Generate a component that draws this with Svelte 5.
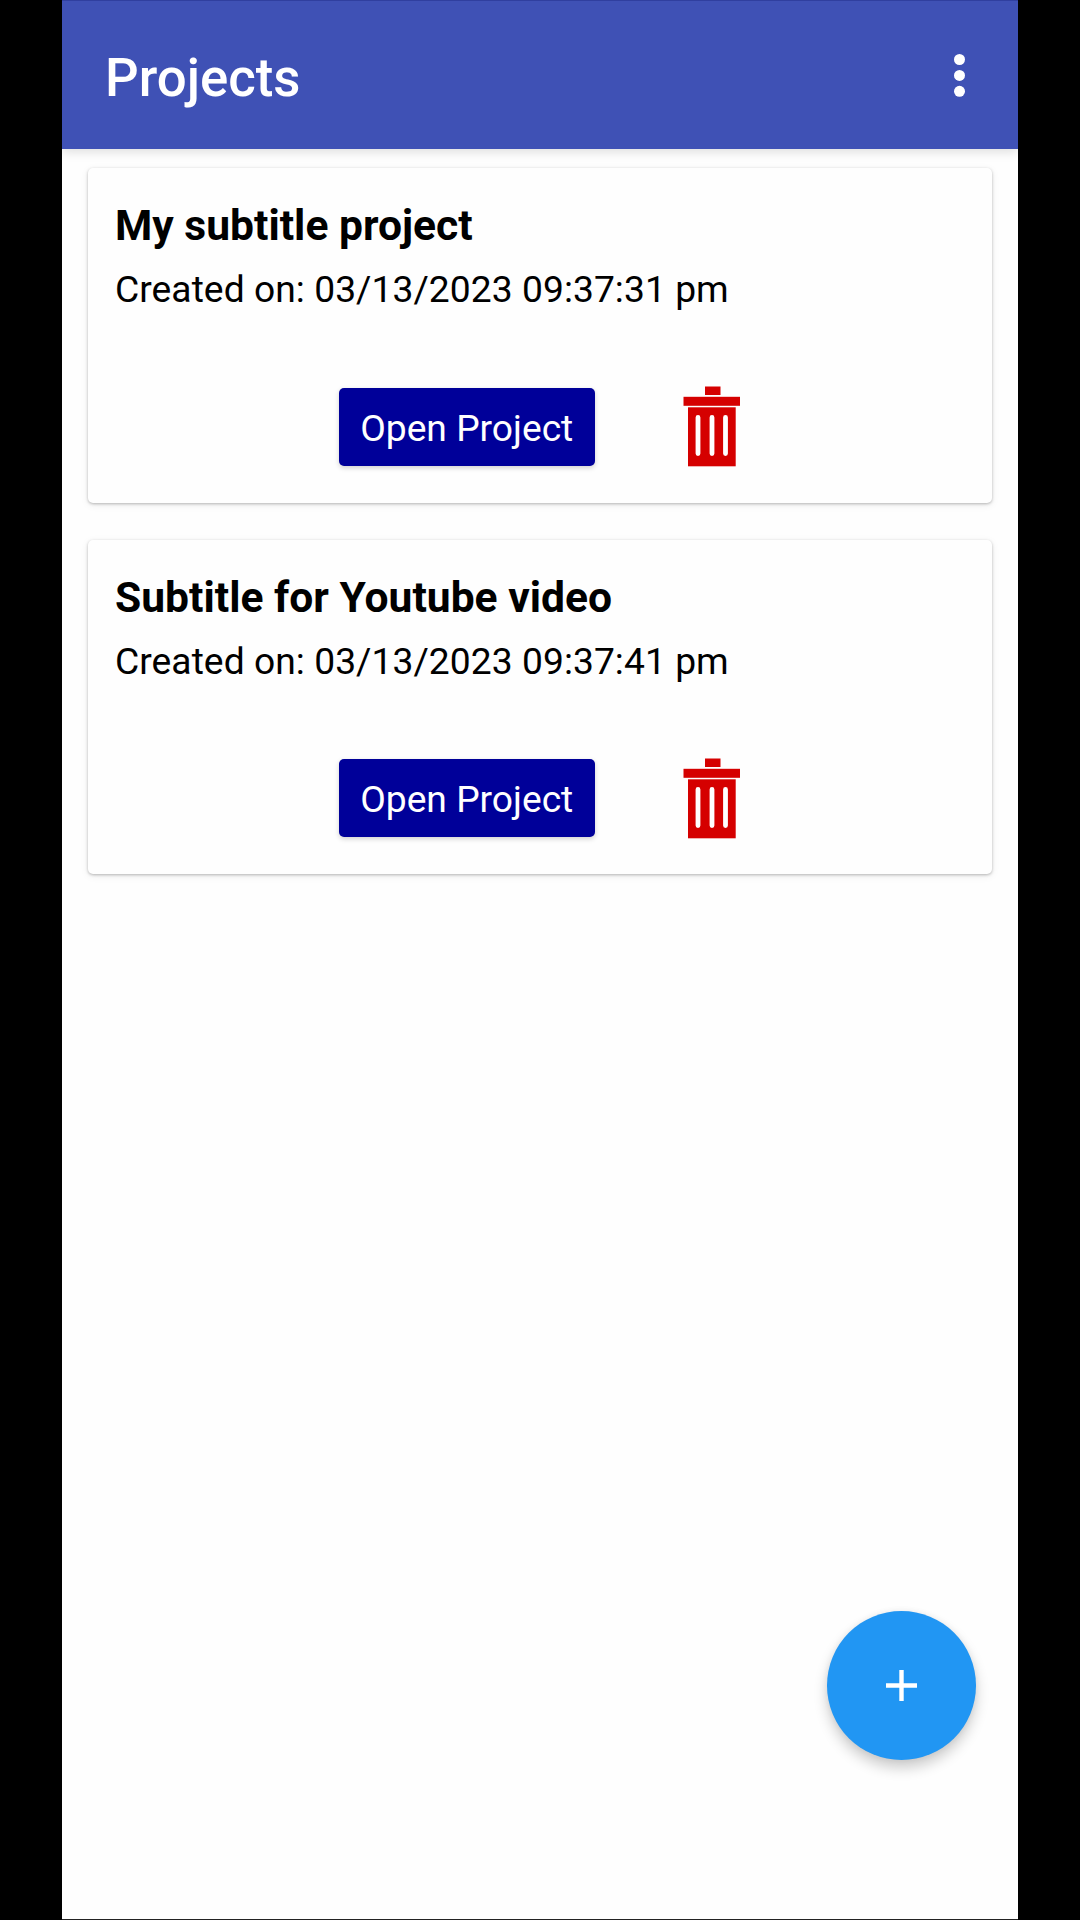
<script lang="ts">
  interface Project {
    name: string;
    created: string;
  }

  let projects: Project[] = $state([
    { name: 'My subtitle project', created: '03/13/2023 09:37:31 pm' },
    { name: 'Subtitle for Youtube video', created: '03/13/2023 09:37:41 pm' }
  ]);

  function removeProject(index: number) {
    projects.splice(index, 1);
  }

  function addProject() {
    projects.push({ name: 'New project', created: '03/13/2023 09:38:00 pm' });
  }
</script>

<div class="screen">
  <header>
    <h1>Projects</h1>
    <button class="menu" aria-label="More options">
      <svg width="12" height="44" viewBox="0 0 12 44" fill="#fff">
        <circle cx="5.5" cy="5.5" r="5.5" />
        <circle cx="5.5" cy="21.4" r="5.5" />
        <circle cx="5.5" cy="37.3" r="5.5" />
      </svg>
    </button>
  </header>

  <main>
    {#each projects as project, i}
      <article class="card">
        <h2>{project.name}</h2>
        <p>Created on: {project.created}</p>
        <div class="actions">
          <button class="open">Open Project</button>
          <button class="delete" aria-label="Delete" onclick={() => removeProject(i)}>
            <svg width="58" height="82" viewBox="0 0 58 82">
              <g fill="#d50000">
                <rect x="22" y="1.5" width="15.5" height="8.5" />
                <rect x="0.5" y="11.8" width="56.5" height="9" />
                <rect x="5" y="22.3" width="47.7" height="59" />
              </g>
              <path
                d="M15 32.5V68.5M29 32.5V68.5M42.5 32.5V68.5"
                stroke="#fff"
                stroke-width="4.8"
                stroke-linecap="round"
              />
            </svg>
          </button>
        </div>
      </article>
    {/each}
  </main>

  <button class="fab" aria-label="Add project" onclick={addProject}>
    <svg width="31" height="31" viewBox="0 0 31 31">
      <path d="M15.5 0V31M0 15.5H31" stroke="#fff" stroke-width="4.4" />
    </svg>
  </button>
</div>

<style>
  :global(body) {
    background: #000;
  }
  .screen {
    position: relative;
    box-sizing: border-box;
    width: 956px;
    height: 1920px;
    margin: 0 auto;
    background: #fefefe;
    border-bottom: 1px solid #222;
    font-family: Roboto, sans-serif;
    color: #000;
  }
  button {
    padding: 0;
    border: none;
    background: none;
    font-family: inherit;
  }
  svg {
    display: block;
  }
  header {
    display: flex;
    align-items: flex-start;
    justify-content: space-between;
    box-sizing: border-box;
    height: 149px;
    padding: 0 52.5px 0 43px;
    background: #3f51b5;
    border-top: 1px solid #303f9f;
    box-shadow: 0 3px 10px rgba(0, 0, 0, 0.13);
  }
  h1 {
    margin: 46px 0 0;
    font-size: 52.8px;
    font-weight: 500;
    line-height: 62px;
    color: #fff;
  }
  .menu {
    margin-top: 52.5px;
  }
  main {
    display: flex;
    flex-direction: column;
    gap: 37px;
    padding: 19px 26.5px 0 26px;
  }
  .card {
    box-sizing: border-box;
    height: 334.5px;
    padding: 33px 27px 0;
    border-radius: 5px;
    background: #fefefe;
    box-shadow: 0 1px 3px rgba(0, 0, 0, 0.26), 0 2px 9px rgba(0, 0, 0, 0.07);
  }
  h2 {
    margin: 0;
    font-size: 42.6px;
    font-weight: 700;
    line-height: 48px;
  }
  p {
    margin: 18px 0 0;
    font-size: 37.2px;
    line-height: 44px;
    letter-spacing: 0.06px;
  }
  .actions {
    display: flex;
    justify-content: center;
    gap: 88px;
    margin-top: 74px;
  }
  .open {
    width: 256px;
    height: 78px;
    margin-top: 2.5px;
    padding-top: 2px;
    border-radius: 5px;
    background: #000099;
    box-shadow: 0 2px 5px rgba(0, 0, 0, 0.18);
    font-size: 37.2px;
    color: #fff;
  }
  .fab {
    position: absolute;
    right: 42.5px;
    bottom: 159px;
    display: flex;
    align-items: center;
    justify-content: center;
    width: 149px;
    height: 149px;
    border-radius: 50%;
    background: #2196f3;
    box-shadow: 0 8px 14px rgba(0, 0, 0, 0.2), 0 0 6px rgba(0, 0, 0, 0.06);
  }
</style>
